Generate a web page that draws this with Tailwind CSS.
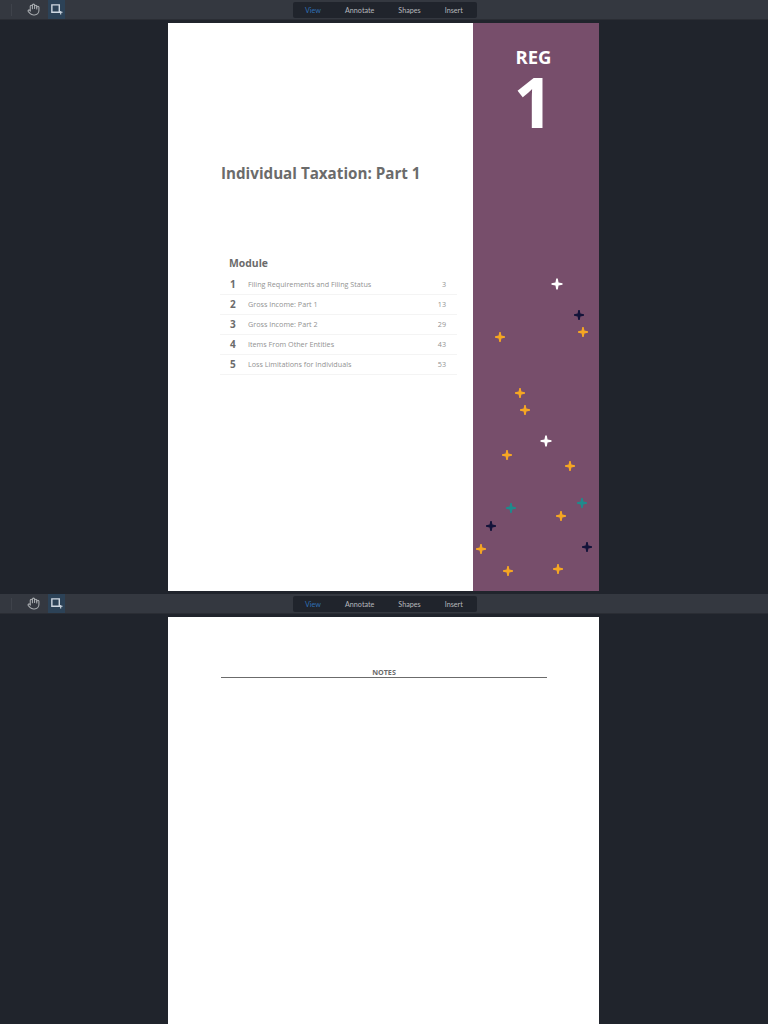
<!DOCTYPE html>
<html lang="en">
<head>
  <meta charset="UTF-8">
  <meta name="viewport" content="width=device-width, initial-scale=1.0">
  <script src="https://cdn.jsdelivr.net/npm/@tailwindcss/browser@4"></script>
  <title>REG 1 - Individual Taxation</title>
</head>
<body class="bg-[#20242c] h-[1024px] w-[768px] overflow-hidden font-['Open_Sans',sans-serif]">

  <!-- First toolbar -->
  <div class="h-[20px] bg-[#343840] border-b border-[#2a2d34] flex items-center relative">
    <div class="w-[1px] h-[12px] bg-[#3f434b] ml-[11px]"></div>
    <svg class="ml-[15px] w-[13px] h-[13px] text-[#a9acb0]" viewBox="0 0 24 24" fill="none" stroke="currentColor" stroke-width="2" stroke-linecap="round" stroke-linejoin="round">
      <path d="M18 11V6a2 2 0 0 0-4 0M14 10V4a2 2 0 0 0-4 0v2M10 10.500V6a2 2 0 0 0-4 0v8"/>
      <path d="M18 8a2 2 0 1 1 4 0v6a8 8 0 0 1-8 8h-2c-2.800 0-4.500-.9-6-2.400l-3.600-3.600a2 2 0 0 1 2.800-2.800L6 15"/>
    </svg>
    <div class="ml-[8px] w-[17px] h-[19px] bg-[#2c4257] flex items-center justify-center">
      <svg class="w-[13px] h-[13px] text-[#cfd8e2]" viewBox="0 0 14 14" fill="none" stroke="currentColor" stroke-width="1.500">
        <path d="M2 2h8v8H2z"/>
        <path d="M10 10h3.500M11.500 8.500v4" stroke-width="1.200"/>
      </svg>
    </div>
    <div class="absolute left-[293px] top-[2px] w-[184px] h-[16px] pt-[2px] bg-[#20242c] rounded-[2px] flex items-center text-[7.200px] text-[#b5b8bc] font-['Lato',sans-serif]">
      <span class="ml-[12px] text-[#2f6fb5]">View</span>
      <span class="ml-[24px]">Annotate</span>
      <span class="ml-[24px]">Shapes</span>
      <span class="ml-[24px]">Insert</span>
    </div>
  </div>

  <!-- Page 1 -->
  <div class="mt-[3px] ml-[168px] w-[431px] h-[568px] bg-white flex">
    <div class="w-[305px] pl-[52px]">
      <h1 class="ml-[1px] mt-[140px] text-[15.200px] leading-[20px] font-bold text-[#6b6b6b]">Individual Taxation: Part 1</h1>
      <h2 class="mt-[73px] ml-[9px] text-[10.400px] leading-[14px] font-bold text-[#6b6b6b]">Module</h2>
      <ul class="mt-[5px] w-[237px] text-[7.200px] text-[#929292]">
        <li class="h-[20px] flex items-center border-b border-[#f4f4f4] pl-[10px] pr-[11px]">
          <span class="w-[18px] text-[10px] font-bold text-[#6b6b6b]">1</span>
          <span class="flex-1">Filing Requirements and Filing Status</span>
          <span>3</span>
        </li>
        <li class="h-[20px] flex items-center border-b border-[#f4f4f4] pl-[10px] pr-[11px]">
          <span class="w-[18px] text-[10px] font-bold text-[#6b6b6b]">2</span>
          <span class="flex-1">Gross Income: Part 1</span>
          <span>13</span>
        </li>
        <li class="h-[20px] flex items-center border-b border-[#f4f4f4] pl-[10px] pr-[11px]">
          <span class="w-[18px] text-[10px] font-bold text-[#6b6b6b]">3</span>
          <span class="flex-1">Gross Income: Part 2</span>
          <span>29</span>
        </li>
        <li class="h-[20px] flex items-center border-b border-[#f4f4f4] pl-[10px] pr-[11px]">
          <span class="w-[18px] text-[10px] font-bold text-[#6b6b6b]">4</span>
          <span class="flex-1">Items From Other Entities</span>
          <span>43</span>
        </li>
        <li class="h-[20px] flex items-center border-b border-[#f4f4f4] pl-[10px] pr-[11px]">
          <span class="w-[18px] text-[10px] font-bold text-[#6b6b6b]">5</span>
          <span class="flex-1">Loss Limitations for Individuals</span>
          <span>53</span>
        </li>
      </ul>
    </div>

    <!-- Purple side panel -->
    <div class="w-[126px] bg-[#774e6b] relative text-white text-center pr-[5px]">
      <div class="pt-[22px] text-[18.500px] leading-[24px] font-bold">REG</div>
      <div class="text-[70px] leading-[64px] font-bold">1</div>
      <svg class="absolute inset-0 w-[126px] h-[568px]" viewBox="473 23 126 568">
        <defs>
          <polygon id="star" points="-.7,-5 .7,-5 1.400,-1.400 5,-.7 5,.7 1.400,1.400 .7,5 -.7,5 -1.400,1.400 -5,.7 -5,-.7 -1.400,-1.400"/>
        </defs>
        <g fill="#ffffff">
          <use href="#star" x="557" y="284" transform="translate(-55.700 -28.400) scale(1.100 1.100)"/>
          <use href="#star" x="546" y="441" transform="translate(-54.600 -44.100) scale(1.100 1.100)"/>
        </g>
        <g fill="#14143a">
          <use href="#star" x="579" y="315"/>
          <use href="#star" x="491" y="526"/>
          <use href="#star" x="587" y="547"/>
        </g>
        <g fill="#f5a623">
          <use href="#star" x="583" y="332"/>
          <use href="#star" x="500" y="337"/>
          <use href="#star" x="520" y="393"/>
          <use href="#star" x="525" y="410"/>
          <use href="#star" x="507" y="455"/>
          <use href="#star" x="570" y="466"/>
          <use href="#star" x="561" y="516"/>
          <use href="#star" x="481" y="549"/>
          <use href="#star" x="508" y="571"/>
          <use href="#star" x="558" y="569"/>
        </g>
        <g fill="#1f8a8c">
          <use href="#star" x="582" y="503"/>
          <use href="#star" x="511" y="508"/>
        </g>
      </svg>
    </div>
  </div>

  <!-- Second toolbar -->
  <div class="mt-[3px] h-[20px] bg-[#343840] border-b border-[#2a2d34] flex items-center relative">
    <div class="w-[1px] h-[12px] bg-[#3f434b] ml-[11px]"></div>
    <svg class="ml-[15px] w-[13px] h-[13px] text-[#a9acb0]" viewBox="0 0 24 24" fill="none" stroke="currentColor" stroke-width="2" stroke-linecap="round" stroke-linejoin="round">
      <path d="M18 11V6a2 2 0 0 0-4 0M14 10V4a2 2 0 0 0-4 0v2M10 10.500V6a2 2 0 0 0-4 0v8"/>
      <path d="M18 8a2 2 0 1 1 4 0v6a8 8 0 0 1-8 8h-2c-2.800 0-4.500-.9-6-2.400l-3.600-3.600a2 2 0 0 1 2.800-2.800L6 15"/>
    </svg>
    <div class="ml-[8px] w-[17px] h-[19px] bg-[#2c4257] flex items-center justify-center">
      <svg class="w-[13px] h-[13px] text-[#cfd8e2]" viewBox="0 0 14 14" fill="none" stroke="currentColor" stroke-width="1.500">
        <path d="M2 2h8v8H2z"/>
        <path d="M10 10h3.500M11.500 8.500v4" stroke-width="1.200"/>
      </svg>
    </div>
    <div class="absolute left-[293px] top-[2px] w-[184px] h-[16px] pt-[2px] bg-[#20242c] rounded-[2px] flex items-center text-[7.200px] text-[#b5b8bc] font-['Lato',sans-serif]">
      <span class="ml-[12px] text-[#2f6fb5]">View</span>
      <span class="ml-[24px]">Annotate</span>
      <span class="ml-[24px]">Shapes</span>
      <span class="ml-[24px]">Insert</span>
    </div>
  </div>

  <!-- Page 2 -->
  <div class="mt-[3px] ml-[168px] w-[431px] h-[407px] bg-white pl-[53px]">
    <div class="pt-[51px] w-[326px] border-b border-[#6b6b6b] text-center text-[7.200px] leading-[9px] font-bold text-[#6b6b6b]">NOTES</div>
  </div>

</body>
</html>
